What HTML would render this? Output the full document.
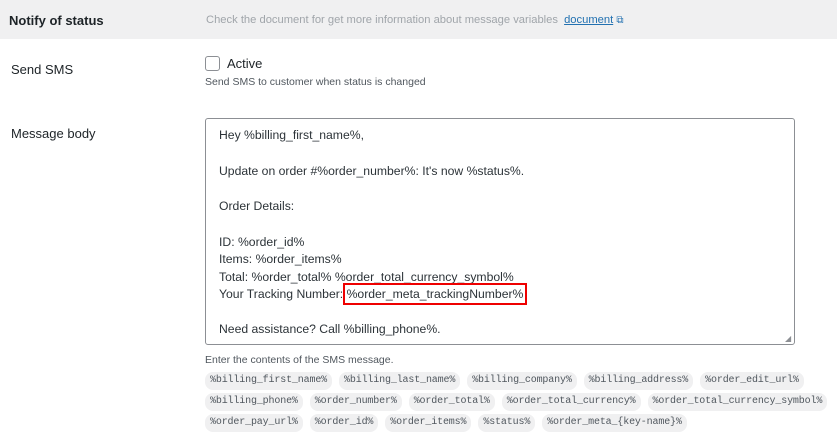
<!DOCTYPE html>
<html><head><style>
body{margin:0;width:837px;height:440px;background:#fff;font-family:"Liberation Sans",sans-serif;color:#1d2327;position:relative;overflow:hidden}
.hdr{position:absolute;left:0;top:0;width:837px;height:39px;background:#f0f0f1}
.abs{position:absolute;white-space:nowrap}
.ta{position:absolute;left:205px;top:118px;width:590px;height:227px;border:1px solid #8c8f94;border-radius:3px;box-sizing:border-box}
.tl{position:absolute;left:219px;font-size:12.2px;color:#2c3338}
.row{position:absolute;left:205px;display:flex;gap:7px;white-space:nowrap}
.row span{font-family:"Liberation Mono",monospace;font-size:10px;letter-spacing:-0.15px;background:#f0f0f1;border-radius:8px;padding:2px 5px;height:14px;line-height:14px;color:#50575e}
</style></head><body>
<div class="hdr"></div>
<div class="abs" style="left:9px;top:13px;font-size:13px;font-weight:bold">Notify of status</div>
<div class="abs" style="left:206px;top:14px;font-size:11.2px;color:#a0a5aa">Check the document for get more information about message variables <span style="color:#2271b1;text-decoration:underline;margin-left:3px">document</span> <span style="color:#2271b1;font-size:10px">⧉</span></div>
<div class="abs" style="left:11px;top:62px;font-size:13px">Send SMS</div>
<div class="abs" style="left:205px;top:56px;width:13px;height:13px;border:1px solid #8c8f94;border-radius:3px"></div>
<div class="abs" style="left:227px;top:56px;font-size:13px">Active</div>
<div class="abs" style="left:205px;top:76px;font-size:10.5px;color:#50575e">Send SMS to customer when status is changed</div>
<div class="abs" style="left:11px;top:126px;font-size:13px">Message body</div>
<div class="ta"></div>
<div class="tl" style="top:128px">Hey %billing_first_name%,</div>
<div class="tl" style="top:164px">Update on order #%order_number%: It's now %status%.</div>
<div class="tl" style="top:199px">Order Details:</div>
<div class="tl" style="top:235px">ID: %order_id%</div>
<div class="tl" style="top:252px">Items: %order_items%</div>
<div class="tl" style="top:270px">Total: %order_total% %order_total_currency_symbol%</div>
<div class="tl" style="top:287px">Your Tracking Number: <span style="outline:2.5px solid #e00;outline-offset:2px">%order_meta_trackingNumber%</span></div>
<div class="tl" style="top:322px">Need assistance? Call %billing_phone%.</div>
<div class="abs" style="left:785px;top:334px;font-size:8px;color:#8c8f94">◢</div>
<div class="abs" style="left:205px;top:354px;font-size:10.5px;color:#50575e">Enter the contents of the SMS message.</div>
<div class="row" style="top:372px"><span>%billing_first_name%</span><span>%billing_last_name%</span><span>%billing_company%</span><span>%billing_address%</span><span>%order_edit_url%</span></div>
<div class="row" style="top:393px"><span>%billing_phone%</span><span>%order_number%</span><span>%order_total%</span><span>%order_total_currency%</span><span>%order_total_currency_symbol%</span></div>
<div class="row" style="top:414px"><span>%order_pay_url%</span><span>%order_id%</span><span>%order_items%</span><span>%status%</span><span>%order_meta_{key-name}%</span></div>
</body></html>
